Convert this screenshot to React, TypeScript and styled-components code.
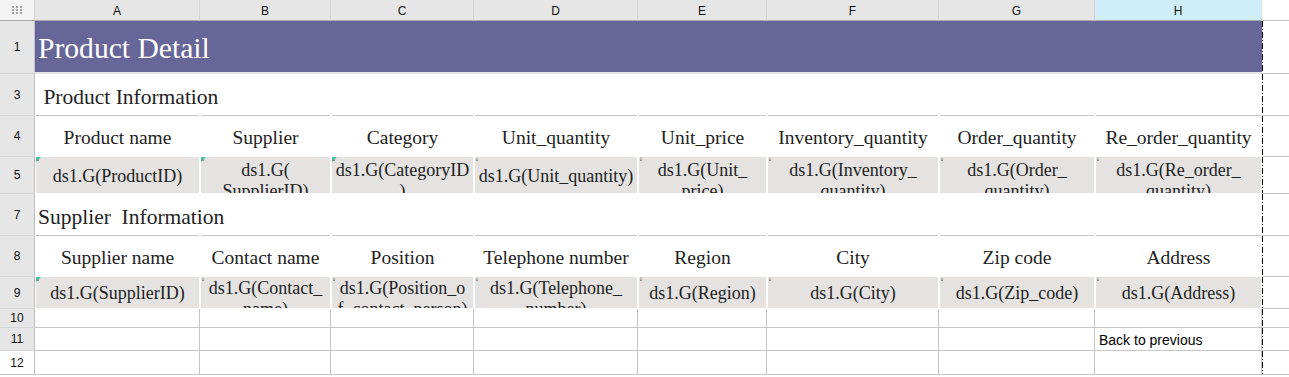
import React from 'react';
import styled, { createGlobalStyle, css } from 'styled-components';

const COLS = [165, 131, 143, 164, 129, 172, 156, 167];
const LETTERS = ['A', 'B', 'C', 'D', 'E', 'F', 'G', 'H'];
const GRID = '#c6c6c6';

type Field = { lines: string[]; flag?: boolean };

const productHeads = [
  'Product name',
  'Supplier',
  'Category',
  'Unit_quantity',
  'Unit_price',
  'Inventory_quantity',
  'Order_quantity',
  'Re_order_quantity',
];

const productData: Field[] = [
  { lines: ['ds1.G(ProductID)'], flag: true },
  { lines: ['ds1.G(', 'SupplierID)'], flag: true },
  { lines: ['ds1.G(CategoryID', ')'], flag: true },
  { lines: ['ds1.G(Unit_quantity)'] },
  { lines: ['ds1.G(Unit_', 'price)'] },
  { lines: ['ds1.G(Inventory_', 'quantity)'] },
  { lines: ['ds1.G(Order_', 'quantity)'] },
  { lines: ['ds1.G(Re_order_', 'quantity)'] },
];

const supplierHeads = [
  'Supplier name',
  'Contact name',
  'Position',
  'Telephone number',
  'Region',
  'City',
  'Zip code',
  'Address',
];

const supplierData: Field[] = [
  { lines: ['ds1.G(SupplierID)'], flag: true },
  { lines: ['ds1.G(Contact_', 'name)'] },
  { lines: ['ds1.G(Position_o', 'f_contact_person)'] },
  { lines: ['ds1.G(Telephone_', 'number)'] },
  { lines: ['ds1.G(Region)'] },
  { lines: ['ds1.G(City)'] },
  { lines: ['ds1.G(Zip_code)'] },
  { lines: ['ds1.G(Address)'] },
];

const GlobalStyle = createGlobalStyle`
  html, body {
    margin: 0;
    padding: 0;
    background: #fff;
  }
  body {
    font-family: 'Liberation Serif', 'Times New Roman', serif;
  }
`;

const Sheet = styled.div`
  display: grid;
  grid-template-columns: 35px ${COLS.map((c) => `${c}px`).join(' ')} 1fr;
  grid-template-rows: 21px 53px 42px 41px 37px 42px 41px 32px 19px 23px 24px;
  width: 1289px;
  height: 377px;
  background: #fff;
  overflow: hidden;
`;

const Corner = styled.div`
  display: flex;
  align-items: center;
  justify-content: center;
  background: #f3f3f3;
  border-right: 1px solid #d5d5d5;
  border-bottom: 1px solid #a9a9a9;
`;

const ColHead = styled.div<{ $active?: boolean }>`
  display: flex;
  align-items: center;
  justify-content: center;
  padding-top: 1px;
  background: ${(p) => (p.$active ? '#cfeefa' : '#e6e6e6')};
  border-right: 1px solid ${(p) => (p.$active ? '#cfeefa' : '#d5d5d5')};
  border-bottom: 1px solid #a9a9a9;
  font: 12px 'Liberation Sans', Arial, sans-serif;
  color: #111;
`;

// trailing column right of H; below the header it carries the page-break line
const Tail = styled.div<{ $break?: boolean }>`
  border-bottom: 1px solid ${GRID};
  ${(p) =>
    p.$break &&
    css`
      background: repeating-linear-gradient(
          to bottom,
          #000 0 6px,
          transparent 6px 8px,
          #000 8px 9px,
          transparent 9px 11px
        )
        left top / 1px 100% no-repeat;
    `}
`;

const RowHead = styled.div<{ $blank?: boolean }>`
  display: flex;
  align-items: center;
  justify-content: center;
  background: ${(p) => (p.$blank ? '#fff' : '#e6e6e6')};
  border-right: 1px solid #bdbdbd;
  border-bottom: 1px solid ${(p) => (p.$blank ? GRID : '#d6d6d6')};
  font: 12px 'Liberation Sans', Arial, sans-serif;
  color: #111;
`;

const Title = styled.div`
  grid-column: span 8;
  display: flex;
  align-items: center;
  padding: 4px 0 0 3px;
  background: #666699;
  border-bottom: 2px solid #e6e6e6;
  color: #fff;
  font-size: 29.6px;
  white-space: pre;
`;

const Section = styled.div`
  display: flex;
  align-items: center;
  padding: 4px 0 0 2px;
  border: solid transparent;
  border-width: 0 1px;
  box-shadow: inset 0 -1px 0 ${GRID};
  font-size: 21.5px;
  color: #222;
  white-space: pre;
  overflow: visible;
`;

const Head = styled.div`
  display: flex;
  align-items: center;
  justify-content: center;
  padding-top: 3px;
  font-size: 19.5px;
  color: #222;
  white-space: nowrap;
`;

const Data = styled.div<{ $wrap: boolean; $pad: number }>`
  position: relative;
  display: flex;
  flex-direction: column;
  align-items: center;
  justify-content: ${(p) => (p.$wrap ? 'flex-start' : 'center')};
  padding-top: ${(p) => p.$pad}px;
  background: #e4e3e1;
  border: solid #fff;
  border-width: 0 1px 1px;
  overflow: hidden;
  font-size: 18px;
  line-height: 20.7px;
  color: #222;
`;

const Line = styled.span`
  white-space: nowrap;
`;

const Marker = styled.svg`
  position: absolute;
  top: 0;
  left: 0;
`;

const Blank = styled.div`
  display: flex;
  align-items: center;
  padding: 1px 0 0 4px;
  border-right: 1px solid ${GRID};
  border-bottom: 1px solid ${GRID};
  font: 14px 'Liberation Sans', Arial, sans-serif;
  color: #000;
  white-space: nowrap;
`;

function CornerDots() {
  const dots = [];
  for (let r = 0; r < 3; r++) {
    for (let c = 0; c < 3; c++) {
      dots.push(<rect key={`${r}-${c}`} x={c * 4} y={r * 3} width={2} height={2} fill="#a3a3a3" />);
    }
  }
  return (
    <svg width="10" height="8" viewBox="0 0 10 8">
      {dots}
    </svg>
  );
}

function CellMarker({ flag }: { flag?: boolean }) {
  return (
    <Marker width="6" height="6" viewBox="0 0 6 6">
      {flag && <path d="M0 0H5L0 5Z" fill="#3cc9a6" />}
      <path d="M2 0.5V4M1 2.8L2 4L3 2.8" stroke="#8a8a8a" strokeWidth="0.9" fill="none" />
    </Marker>
  );
}

function HeadRow({ num, labels }: { num: number; labels: string[] }) {
  return (
    <>
      <RowHead>{num}</RowHead>
      {labels.map((l) => (
        <Head key={l}>{l}</Head>
      ))}
      <Tail $break />
    </>
  );
}

function DataRow({ num, fields, wrapPad, singlePad }: { num: number; fields: Field[]; wrapPad: number; singlePad: number }) {
  return (
    <>
      <RowHead>{num}</RowHead>
      {fields.map((f, i) => {
        const wrap = f.lines.length > 1;
        return (
          <Data key={i} $wrap={wrap} $pad={wrap ? wrapPad : singlePad}>
            <CellMarker flag={f.flag} />
            {f.lines.map((line) => (
              <Line key={line}>{line}</Line>
            ))}
          </Data>
        );
      })}
      <Tail $break />
    </>
  );
}

function SectionRow({ num, label }: { num: number; label: string }) {
  return (
    <>
      <RowHead>{num}</RowHead>
      {LETTERS.map((l, i) => (
        <Section key={l}>{i === 0 ? label : null}</Section>
      ))}
      <Tail $break />
    </>
  );
}

function BlankRow({ num, link, last }: { num: number; link?: string; last?: boolean }) {
  return (
    <>
      <RowHead $blank={last}>{num}</RowHead>
      {LETTERS.map((l) => (
        <Blank key={l}>{l === 'H' ? link : null}</Blank>
      ))}
      <Tail $break />
    </>
  );
}

export default function App() {
  return (
    <>
      <GlobalStyle />
      <Sheet>
        <Corner>
          <CornerDots />
        </Corner>
        {LETTERS.map((l) => (
          <ColHead key={l} $active={l === 'H'}>
            {l}
          </ColHead>
        ))}
        <Tail />

        <RowHead>1</RowHead>
        <Title>Product Detail</Title>
        <Tail $break />

        <SectionRow num={3} label=" Product Information" />
        <HeadRow num={4} labels={productHeads} />
        <DataRow num={5} fields={productData} wrapPad={3} singlePad={2} />

        <SectionRow num={7} label="Supplier  Information" />
        <HeadRow num={8} labels={supplierHeads} />
        <DataRow num={9} fields={supplierData} wrapPad={1} singlePad={1} />

        <BlankRow num={10} />
        <BlankRow num={11} link="Back to previous" />
        <BlankRow num={12} last />
      </Sheet>
    </>
  );
}
